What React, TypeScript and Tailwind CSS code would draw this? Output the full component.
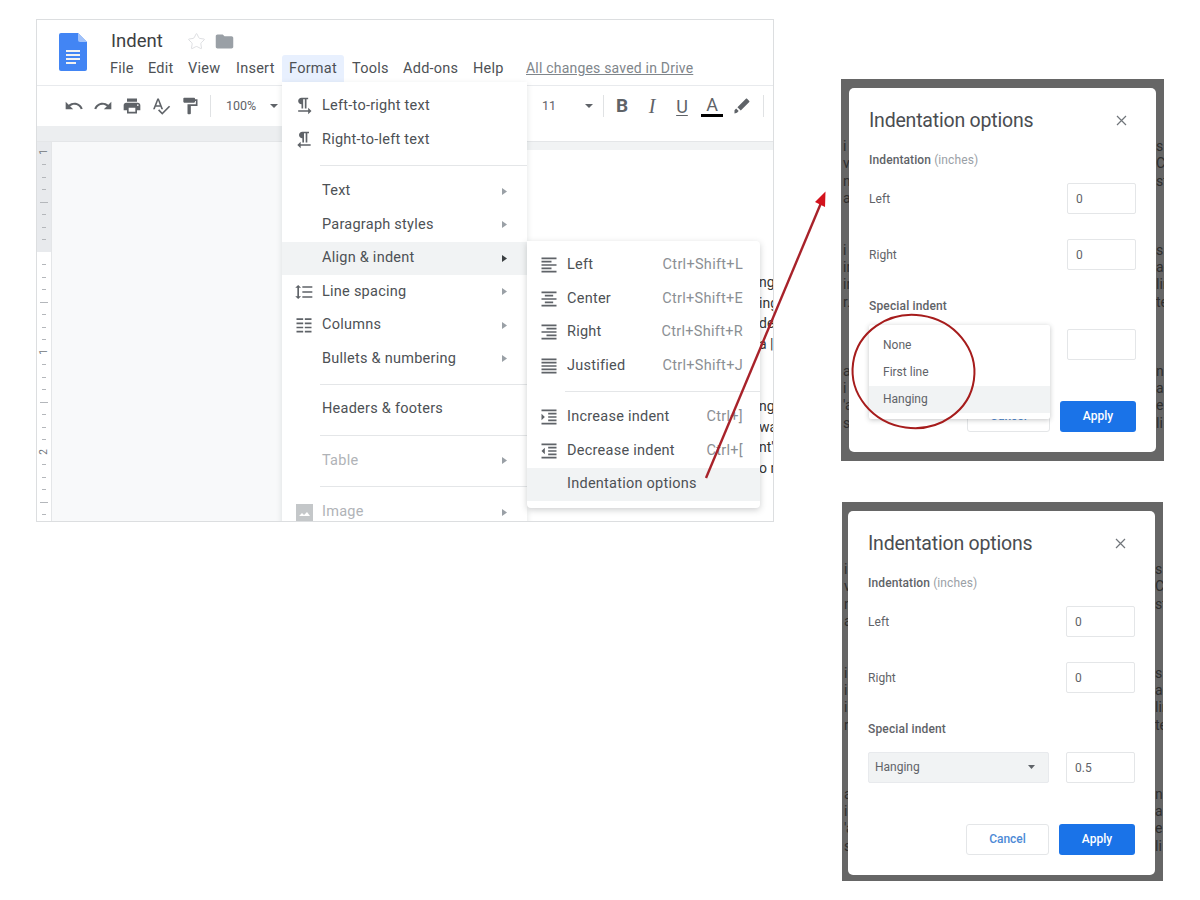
import { Star } from 'lucide-react'

const font = { fontFamily: 'Roboto, "Liberation Sans", sans-serif' }

const icons: Record<string, string> = {
  undo: 'M12.5 8c-2.65 0-5.05.99-6.9 2.6L2 7v9h9l-3.62-3.62c1.39-1.16 3.16-1.88 5.12-1.88 3.54 0 6.55 2.31 7.6 5.5l2.37-.78C21.08 11.03 17.15 8 12.5 8z',
  redo: 'M18.4 10.6C16.55 8.99 14.15 8 11.5 8c-4.65 0-8.58 3.03-9.96 7.22L3.9 16c1.05-3.19 4.05-5.5 7.6-5.5 1.95 0 3.73.72 5.12 1.88L13 16h9V7l-3.6 3.6z',
  print: 'M19 8H5c-1.66 0-3 1.34-3 3v6h4v4h12v-4h4v-6c0-1.66-1.34-3-3-3zm-3 11H8v-5h8v5zm3-7c-.55 0-1-.45-1-1s.45-1 1-1 1 .45 1 1-.45 1-1 1zm-1-9H6v4h12V3z',
  spell: 'M12.45 16h2.09L9.43 3H7.57L2.46 16h2.09l1.12-3h5.64l1.14 3zm-6.02-5L8.5 5.48 10.57 11H6.43zm15.16.59l-8.09 8.09L9.83 16l-1.41 1.41 5.09 5.09L23 13l-1.41-1.41z',
  paint: 'M18 4V3c0-.55-.45-1-1-1H5c-.55 0-1 .45-1 1v4c0 .55.45 1 1 1h12c.55 0 1-.45 1-1V6h1v4H9v11c0 .55.45 1 1 1h2c.55 0 1-.45 1-1v-9h8V4h-3z',
  pen: 'M3 21l3-1 2-2-3-3-2 2zM6.5 13.5l4 4L20.7 7.3c.4-.4.4-1 0-1.4l-2.6-2.6c-.4-.4-1-.4-1.4 0z',
  folder: 'M10 4H4c-1.1 0-2 .9-2 2v12c0 1.1.9 2 2 2h16c1.1 0 2-.9 2-2V8c0-1.1-.9-2-2-2h-8l-2-2z',
  ltr: 'M9 10v5h2V4h2v11h2V4h2V2H9C6.79 2 5 3.79 5 6s1.79 4 4 4zm12 8l-4-4v3H5v2h12v3l4-4z',
  rtl: 'M10 10v5h2V4h2v11h2V4h2V2h-8C7.79 2 6 3.79 6 6s1.79 4 4 4zm-2 7v-3l-4 4 4 4v-3h12v-2H8z',
  spacing: 'M6 7h2.5L5 3.5 1.5 7H4v10H1.5L5 20.5 8.5 17H6V7zm4-2v2h12V5H10zm0 14h12v-2H10v2zm0-6h12v-2H10v2z',
  columns: 'M3 4h8v2H3zM13 4h8v2h-8zM3 9h8v2H3zM13 9h8v2h-8zM3 14h8v2H3zM13 14h8v2h-8zM3 19h8v2H3zM13 19h8v2h-8z',
  left: 'M15 15H3v2h12v-2zm0-8H3v2h12V7zM3 13h18v-2H3v2zm0 8h18v-2H3v2zM3 3v2h18V3H3z',
  center: 'M7 15v2h10v-2H7zm-4 6h18v-2H3v2zm0-8h18v-2H3v2zm4-6v2h10V7H7zM3 3v2h18V3H3z',
  right: 'M3 21h18v-2H3v2zm6-4h12v-2H9v2zm-6-4h18v-2H3v2zm6-4h12V7H9v2zM3 3v2h18V3H3z',
  justify: 'M3 21h18v-2H3v2zm0-4h18v-2H3v2zm0-4h18v-2H3v2zm0-4h18V7H3v2zm0-6v2h18V3H3z',
  increase: 'M3 21h18v-2H3v2zM3 8v8l4-4-4-4zm8 9h10v-2H11v2zM3 3v2h18V3H3zm8 6h10V7H11v2zm0 4h10v-2H11v2z',
  decrease: 'M11 17h10v-2H11v2zm-8-5l4 4V8l-4 4zm0 9h18v-2H3v2zM3 3v2h18V3H3zm8 6h10V7H11v2zm0 4h10v-2H11v2z',
}

function Icon({ name, size = 20, fill = '#5f6368' }: { name: string; size?: number; fill?: string }) {
  return (
    <svg width={size} height={size} viewBox="0 0 24 24" fill={fill} className="shrink-0">
      <path d={icons[name]} />
    </svg>
  )
}

function Caret() {
  return (
    <svg width="8" height="4" viewBox="0 0 8 4" className="shrink-0">
      <path d="M0 0h8L4 4z" fill="#5f6368" />
    </svg>
  )
}

function Arrow({ dark }: { dark?: boolean }) {
  return (
    <svg width="5" height="7" viewBox="0 0 5 7" className="shrink-0">
      <path d="M0 0l5 3.5L0 7z" fill={dark ? '#3c4043' : '#9aa0a6'} />
    </svg>
  )
}

function Sep({ h = 'h-[18px]' }: { h?: string }) {
  return (
    <div className={`${h} flex items-center pl-[38px]`}>
      <div className="h-px w-full bg-[#e4e6e8]" />
    </div>
  )
}

function MenuRow({ label, icon, disabled, active, arrow = true, image }: {
  label: string
  icon?: string
  disabled?: boolean
  active?: boolean
  arrow?: boolean
  image?: boolean
}) {
  return (
    <div className={`flex h-[33.5px] items-center pr-[20px] ${active ? 'bg-[#f1f3f4]' : ''}`}>
      <div className="flex w-[40px] justify-center pl-[4px]">
        {icon && <Icon name={icon} size={20} />}
        {image && (
          <svg width="17" height="17" viewBox="0 0 17 17" className="shrink-0">
            <path d="M0 0h17v17H0z" fill="#c4c7c9" />
            <path d="M3 12l3-3 2 2 3-3 3 4z" fill="#fff" />
          </svg>
        )}
      </div>
      <span className={`flex-1 text-[14.5px] tracking-[0.25px] ${disabled ? 'text-[#b0b3b7]' : 'text-[#4d5155]'}`}>{label}</span>
      {arrow && <Arrow dark={active} />}
    </div>
  )
}

function SubRow({ label, icon, keys, active }: { label: string; icon?: string; keys?: string; active?: boolean }) {
  return (
    <div className={`flex h-[33.5px] items-center pr-[17px] ${active ? 'bg-[#f1f3f4]' : ''}`}>
      <div className="flex w-[40px] justify-center pl-[4px]">{icon && <Icon name={icon} size={20} />}</div>
      <span className="flex-1 text-[14.5px] tracking-[0.25px] text-[#4d5155]">{label}</span>
      {keys && <span className="text-[14.5px] tracking-[0.3px] text-[#8b8f94]">{keys}</span>}
    </div>
  )
}

function FormatMenu() {
  return (
    <div className="absolute left-[245px] top-[62px] w-[245px] bg-white pt-[7.5px] shadow-[0_2px_6px_rgba(60,64,67,0.15)]">
      <MenuRow label="Left-to-right text" icon="ltr" arrow={false} />
      <MenuRow label="Right-to-left text" icon="rtl" arrow={false} />
      <Sep />
      <MenuRow label="Text" />
      <MenuRow label="Paragraph styles" />
      <MenuRow label="Align & indent" active />
      <MenuRow label="Line spacing" icon="spacing" />
      <MenuRow label="Columns" icon="columns" />
      <MenuRow label="Bullets & numbering" />
      <Sep h="h-[17px]" />
      <MenuRow label="Headers & footers" arrow={false} />
      <Sep />
      <MenuRow label="Table" disabled />
      <Sep />
      <MenuRow label="Image" image disabled />
    </div>
  )
}

function AlignMenu() {
  return (
    <div className="absolute left-[490px] top-[221px] w-[233px] rounded-b-[4px] rounded-tr-[4px] bg-white pb-[7px] pt-[7.5px] shadow-[0_2px_6px_rgba(60,64,67,0.25)]">
      <SubRow label="Left" icon="left" keys="Ctrl+Shift+L" />
      <SubRow label="Center" icon="center" keys="Ctrl+Shift+E" />
      <SubRow label="Right" icon="right" keys="Ctrl+Shift+R" />
      <SubRow label="Justified" icon="justify" keys="Ctrl+Shift+J" />
      <Sep />
      <SubRow label="Increase indent" icon="increase" keys="Ctrl+]" />
      <SubRow label="Decrease indent" icon="decrease" keys="Ctrl+[" />
      <SubRow label="Indentation options" active />
    </div>
  )
}

function TopRuler() {
  const marks = Array.from({ length: 19 }, (_, i) => i)
  return (
    <div className="flex h-[16px] shrink-0 border-b border-[#e4e6e8] bg-white">
      <div className="w-[245px] bg-[#eceef0]" />
      <div className="flex items-center pl-[4px]">
        {marks.map((i) => (
          <div key={i} className="flex w-[12.5px] justify-center text-[11px] text-[#70757a]">
            {i === 2 ? '1' : i === 10 ? '2' : i === 18 ? '3' : i === 6 || i === 14 ? (
              <div className="h-[7px] w-px bg-[#b8bbbf]" />
            ) : (
              <div className="h-px w-px bg-[#a0a4a8]" />
            )}
          </div>
        ))}
      </div>
    </div>
  )
}

function SideRuler() {
  const ticks = Array.from({ length: 30 }, (_, i) => i)
  return (
    <div className="relative w-[15px] shrink-0 border-r border-[#e4e6e8] bg-white">
      <div className="absolute left-0 top-0 h-[110px] w-full bg-[#e8eaed]" />
      <div className="relative flex flex-col pt-[3.75px]">
        {ticks.map((i) => (
          <div key={i} className="flex h-[12.5px] items-center justify-center">
            {i === 0 || i === 16 || i === 24 ? (
              <span className="-rotate-90 text-[10px] leading-none text-[#70757a]">{i === 24 ? '2' : '1'}</span>
            ) : i === 8 ? null : (
              <div className={`h-px bg-[#b4b7bb] ${i % 8 === 4 ? 'w-[8px]' : 'w-[4px]'}`} />
            )}
          </div>
        ))}
      </div>
    </div>
  )
}

function DocWindow() {
  const menus = [
    { t: 'File', c: 'w-[38px]' },
    { t: 'Edit', c: 'w-[40px]' },
    { t: 'View', c: 'w-[48px]' },
    { t: 'Insert', c: 'w-[46px]' },
  ]
  return (
    <div className="relative flex h-[503px] w-[738px] shrink-0 flex-col overflow-hidden border border-[#dcdee0] bg-white">
      <div className="flex h-[66px] shrink-0 border-b border-[#e8eaed] pl-[22px]">
        <svg width="28" height="38" viewBox="0 0 28 38" className="mt-[13px] shrink-0">
          <path d="M2 0h17l9 9v27a2 2 0 0 1-2 2H2a2 2 0 0 1-2-2V2a2 2 0 0 1 2-2z" fill="#4285f4" />
          <path d="M19 0l9 9h-7a2 2 0 0 1-2-2z" fill="#a1c2fa" />
          <path d="M7 17h14v2H7zM7 21h14v2H7zM7 25h14v2H7zM7 29h10v2H7z" fill="#f1f1f1" />
        </svg>
        <div className="ml-[23px] flex flex-col pt-[9px]">
          <div className="flex h-[24px] items-center pl-px">
            <span className="w-[76px] pt-[2px] text-[18.5px] text-[#3c4043]">Indent</span>
            <Star size={19} strokeWidth={1} color="#d5d7da" />
            <div className="ml-[8px]">
              <Icon name="folder" size={21} fill="#9aa0a6" />
            </div>
          </div>
          <div className="mt-[2px] flex h-[27px] items-center text-[14.5px] tracking-[0.25px] text-[#4d5155]">
            {menus.map((m) => (
              <span key={m.t} className={`${m.c} whitespace-nowrap`}>{m.t}</span>
            ))}
            <span className="flex h-[27px] w-[62px] items-center justify-center rounded-t-[3px] bg-[#e8f0fe]">Format</span>
            <span className="ml-[8px] w-[51px]">Tools</span>
            <span className="w-[70px]">Add-ons</span>
            <span className="w-[53px]">Help</span>
            <span className="text-[14px] tracking-[0.2px] text-[#80868b] underline">All changes saved in Drive</span>
          </div>
        </div>
      </div>

      <div className="flex h-[40px] shrink-0 items-center pl-[27px]">
        <div className="flex gap-[9px]">
          <Icon name="undo" />
          <Icon name="redo" />
          <Icon name="print" />
          <Icon name="spell" />
          <Icon name="paint" />
        </div>
        <div className="ml-[10px] h-[22px] w-px bg-[#e0e2e4]" />
        <span className="ml-[15px] w-[44px] text-[12.5px] text-[#5f6368]">100%</span>
        <Caret />
        <span className="ml-[264px] w-[43px] text-[12.5px] text-[#5f6368]">11</span>
        <Caret />
        <div className="ml-[10px] h-[22px] w-px bg-[#e0e2e4]" />
        <div className="ml-[3px] flex w-[30px] justify-center text-[19px] font-bold text-[#5f6368]">B</div>
        <div className="flex w-[30px] justify-center text-[20px] font-medium italic text-[#5f6368]" style={{ fontFamily: '"Liberation Serif", serif' }}>I</div>
        <div className="flex w-[30px] justify-center text-[18px] text-[#5f6368] underline underline-offset-[2px]">U</div>
        <div className="flex w-[30px] flex-col items-center">
          <span className="text-[18px] leading-[19px] text-[#5f6368]">A</span>
          <div className="h-[3px] w-[22px] bg-black" />
        </div>
        <div className="flex w-[30px] justify-center">
          <Icon name="pen" />
        </div>
        <div className="ml-[6px] h-[22px] w-px bg-[#e0e2e4]" />
      </div>

      <TopRuler />

      <div className="flex min-h-0 flex-1">
        <SideRuler />
        <div className="w-[230px] bg-[#f8f9fa]" />
        <div className="flex flex-1 flex-col items-end">
          <div className="h-[8px] w-full bg-[#f1f3f4]" />
          <div className="w-[14px] overflow-hidden whitespace-nowrap pt-[122px] text-[14px] leading-[20.5px] text-[#333]">
            <p>ng</p>
            <p>ing</p>
            <p>de</p>
            <p>a |</p>
            <p className="mt-[42px]">ng</p>
            <p>wa</p>
            <p>nt'</p>
            <p>o n</p>
          </div>
        </div>
      </div>

      <FormatMenu />
      <AlignMenu />
    </div>
  )
}

function Field({ value }: { value?: string }) {
  return (
    <div className="flex h-[31px] w-[69px] items-center rounded-[2px] border border-[#e4e6e8] pl-[8px] text-[12px] text-[#5f6368]">
      {value}
    </div>
  )
}

function Row({ label, value, mt }: { label: string; value: string; mt: string }) {
  return (
    <div className={`${mt} flex h-[31px] items-center justify-between`}>
      <span className="text-[12px] tracking-[0.05px] text-[#5f6368]">{label}</span>
      <Field value={value} />
    </div>
  )
}

const leftBits = ['i', 'vl', 'nt', 'ac', '', '', 'i', 'ir', 'ir', 'r.', '', '', '', 'a', 'i', "'a", 's']
const rightBits = ['s t', 'C', 'st', '', '', '', 's t', 'ag', 'lin', 'te', '', '', '', 'n', 'a', 'e', 'li']

function Dialog({ open, frame }: { open?: boolean; frame: string }) {
  return (
    <div className={`relative bg-[#666] ${frame}`}>
      <div className="absolute left-0 top-[59px] w-[12px] overflow-hidden pl-[2px] text-[14px] leading-[17.3px] text-[#2e2e2e]">
        {leftBits.map((b, i) => (
          <div key={i} className="h-[17.3px] whitespace-nowrap">{b}</div>
        ))}
      </div>
      <div className="absolute right-0 top-[59px] w-[8px] overflow-hidden text-[14px] leading-[17.3px] text-[#2e2e2e]">
        {rightBits.map((b, i) => (
          <div key={i} className="h-[17.3px] whitespace-nowrap">{b}</div>
        ))}
      </div>
      <div className="relative flex h-[364px] w-[307px] flex-col rounded-[5px] bg-white px-[20px] pt-[20px]">
        <div className="flex h-[24px] items-center justify-between pr-[9px]">
          <span className="pt-[2px] text-[19.5px] tracking-[-0.2px] text-[#4a4d51]">Indentation options</span>
          <svg width="11" height="11" viewBox="0 0 11 11" className="shrink-0">
            <path d="M1 1l9 9M10 1l-9 9" stroke="#70757a" strokeWidth="1.2" />
          </svg>
        </div>
        <div className="mt-[20px] h-[16px] text-[12px] font-medium leading-[16px] tracking-[0.1px] text-[#5f6368]">
          Indentation <span className="font-normal text-[#9aa0a6]">(inches)</span>
        </div>
        <Row label="Left" value="0" mt="mt-[15px]" />
        <Row label="Right" value="0" mt="mt-[25px]" />
        <div className="mt-[28px] h-[16px] text-[12px] font-medium leading-[16px] tracking-[0.15px] text-[#5f6368]">Special indent</div>
        <div className="mt-[15px] flex h-[31px] items-center justify-between">
          <div className="flex h-[31px] w-[181px] items-center justify-between rounded-[2px] border border-[#e8eaed] bg-[#f1f3f4] pb-[2px] pl-[6px] pr-[13px] text-[12px] text-[#5f6368]">
            Hanging
            <svg width="7" height="4" viewBox="0 0 7 4" className="shrink-0">
              <path d="M0 0h7L3.5 4z" fill="#5f6368" />
            </svg>
          </div>
          <Field value={open ? undefined : '0.5'} />
        </div>
        <div className="mt-[41px] flex justify-end gap-[10px]">
          <div className="flex h-[31px] w-[83px] items-center justify-center rounded-[3px] border border-[#e4e6e8] pb-[2px] text-[12px] font-medium text-[#4d8ad6]">
            Cancel
          </div>
          <div className="flex h-[31px] w-[76px] items-center justify-center rounded-[3px] bg-[#1a73e8] pb-[2px] text-[12px] font-medium text-white">
            Apply
          </div>
        </div>

        {open && (
          <div className="absolute left-[20px] top-[237px] flex h-[94px] w-[181px] flex-col justify-center rounded-[2px] bg-white text-[12px] text-[#5f6368] shadow-[0_1px_5px_rgba(60,64,67,0.3)]">
            <div className="flex h-[27px] items-center pl-[14px]">None</div>
            <div className="flex h-[27px] items-center pl-[14px]">First line</div>
            <div className="flex h-[27px] items-center bg-[#f1f3f4] pl-[14px]">Hanging</div>
          </div>
        )}
      </div>
    </div>
  )
}

export default function App() {
  return (
    <div className="relative flex h-[900px] w-[1200px] overflow-hidden bg-white" style={font}>
      <div className="ml-[36px] mt-[19px]">
        <DocWindow />
      </div>
      <div className="ml-[67px] mt-[79px] flex flex-col items-start gap-[41px]">
        <Dialog open frame="pl-[8px] pr-[8px] py-[9px]" />
        <div className="ml-px">
          <Dialog frame="pl-[6px] pr-[8px] pt-[9px] pb-[6px]" />
        </div>
      </div>

      <svg width="1200" height="900" viewBox="0 0 1200 900" className="pointer-events-none absolute left-0 top-0">
        <path d="M706 478L821 203" stroke="#a8222a" strokeWidth="2.4" fill="none" />
        <path d="M825.5 191.5L815 202l10 5z" fill="#d3121c" />
        <ellipse cx="913.5" cy="371.5" rx="61" ry="56.5" stroke="#a61c1c" strokeWidth="2" fill="none" transform="rotate(8 913.5 371.5)" />
      </svg>
    </div>
  )
}
